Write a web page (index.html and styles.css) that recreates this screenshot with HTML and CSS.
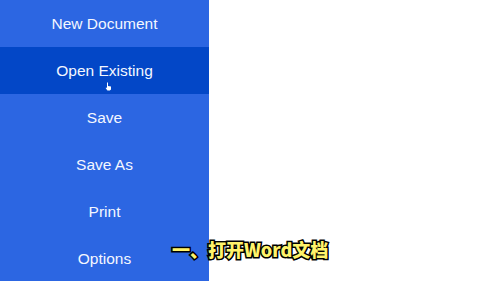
FILE: index.html
```html
<!DOCTYPE html>
<html lang="zh">
<head>
<meta charset="utf-8">
<link rel="stylesheet" href="styles.css">
</head>
<body>
<div class="app">
  <nav class="menu">
    <div class="item">New Document</div>
    <div class="item active">Open Existing<span class="cursor"><svg width="7" height="9" viewBox="0 0 7 9"><path d="M2 0.5 L3 0.5 L3 4 L6 4.6 L6 7.5 L4.8 8.6 L2.4 8.6 L0.6 6 L1.2 5.4 L2 6 Z" fill="#fff"/></svg></span></div>
    <div class="item">Save</div>
    <div class="item">Save As</div>
    <div class="item">Print</div>
    <div class="item">Options</div>
  </nav>
  <main class="content"></main>
</div>
<div class="subtitle">一、打开Word文档</div>
</body>
</html>
```
FILE: styles.css
```css
html, body {
  margin: 0;
  padding: 0;
  background: #ffffff;
}
.app {
  display: flex;
  width: 500px;
  height: 281px;
  overflow: hidden;
}
.menu {
  width: 209px;
  background: #2c66e2;
  display: flex;
  flex-direction: column;
}
.item {
  position: relative;
  height: 47px;
  flex: none;
  display: flex;
  align-items: center;
  justify-content: center;
  color: #f4f7ff;
  font-family: "Liberation Sans", Arial, sans-serif;
  font-size: 15.5px;
}
.item.active {
  background: #0347c7;
}
.cursor {
  position: absolute;
  left: 105px;
  top: 35px;
  line-height: 0;
}
.content {
  flex: 1;
  background: #ffffff;
}
.subtitle {
  position: absolute;
  left: 172px;
  top: 237px;
  font-family: "Noto Sans CJK SC", sans-serif;
  font-weight: 900;
  font-size: 18px;
  line-height: 24px;
  color: #fff36b;
  -webkit-text-stroke: 3px #000;
  paint-order: stroke fill;
  text-shadow: 1px 1px 0 #000;
  letter-spacing: 0;
}
```
